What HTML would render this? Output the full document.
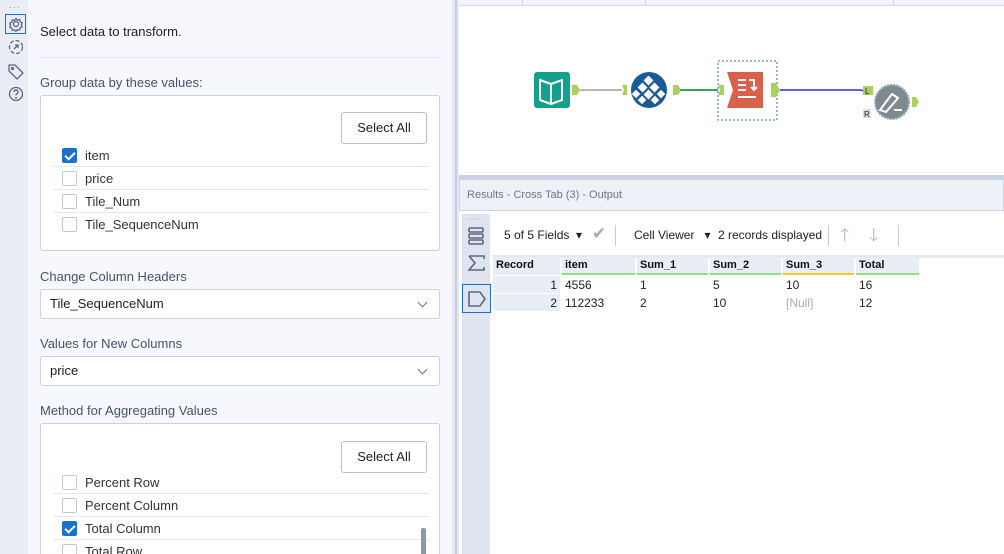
<!DOCTYPE html>
<html><head><meta charset="utf-8"><style>
*{box-sizing:border-box;margin:0;padding:0}
html,body{width:1004px;height:554px;overflow:hidden}
body{position:relative;font-family:"Liberation Sans",sans-serif;background:#fff;font-size:13px;color:#1e2a3a}
.abs{position:absolute}
.lbl{position:absolute;left:40px;font-size:13px;color:#46536b}
.box{position:absolute;left:40px;width:400px;background:#fff;border:1px solid #c9d0de;border-radius:3px}
.btn{position:absolute;right:12px;width:86px;height:32px;border:1px solid #b9c2d3;border-radius:3px;background:#fff;font-size:13px;text-align:center;line-height:30px;color:#222}
.row{position:absolute;left:12px;width:376px;height:23px;border-bottom:1px solid #e3e7ee;font-size:13px;line-height:23px;padding-left:32px;color:#333}
.cb{position:absolute;left:9px;top:4px;width:15px;height:15px;border:1px solid #c2c9d6;border-radius:2px;background:#fff}
.cb.on{background:#1a6fd0;border-color:#1a6fd0}
.cb.on:after{content:"";position:absolute;left:4px;top:1px;width:4px;height:8px;border-right:2px solid #fff;border-bottom:2px solid #fff;transform:rotate(45deg)}
.sel{position:absolute;left:40px;width:400px;height:30px;background:#fff;border:1px solid #c9d0de;border-radius:3px;font-size:13px;line-height:28px;padding-left:9px;color:#222}
.sel:after{content:"";position:absolute;right:13px;top:9px;width:6px;height:6px;border-right:1.5px solid #6a7590;border-bottom:1.5px solid #6a7590;transform:rotate(45deg)}
table{border-collapse:separate;border-spacing:2px 1px;font-size:12px;table-layout:fixed;width:430px}
td{height:17px;padding:0 3px;background:#fff;color:#222;overflow:hidden;white-space:nowrap}
th{height:18px;padding:0 3px;text-align:left;font-weight:bold;background:#e8edf6;color:#111;border-bottom:2px solid #90e37a;font-size:11px}
</style></head><body>
<div class="abs" style="left:0;top:0;width:28px;height:554px;background:#e9edf6"></div>
<div class="abs" style="left:9px;top:5px;font-size:9px;color:#8a93a8;letter-spacing:1px;line-height:4px">···</div>
<div class="abs" style="left:5px;top:14px;width:21px;height:20px;border:1px solid #1a6fd0"></div>
<svg class="abs" style="left:6px;top:15px" width="20" height="88" viewBox="0 0 20 88" fill="none" stroke="#5c6680" stroke-width="1.3">
<circle cx="10" cy="9" r="2.5"/><path d="M10 3.5l1.5 1.6 2.2-.5.5 2.2 2 1-.9 2 .9 2-2 1-.5 2.2-2.2-.5L10 16.5l-1.5-1.6-2.2.5-.5-2.2-2-1 .9-2-.9-2 2-1 .5-2.2 2.2.5z"/>
<circle cx="10" cy="32" r="6.5" stroke-dasharray="4 2"/><path d="M8 34l4-4M9 30h3v3"/>
<path d="M3 50v6l8 8 6-6-8-8z"/><circle cx="6.5" cy="53.5" r="1"/>
<circle cx="10" cy="79" r="6.5"/><path d="M8 77a2 2 0 1 1 2.5 2c-.5.2-.5.8-.5 1.5"/><circle cx="10" cy="83" r=".4"/>
</svg>
<div class="abs" style="left:28px;top:0;width:424px;height:554px;background:#f6f8fd"></div>
<div class="abs" style="left:40px;top:24px;font-size:13px;color:#222">Select data to transform.</div>
<div class="abs" style="left:40px;top:57px;width:400px;height:1px;background:#e2e6ee"></div>
<div class="lbl" style="top:75px">Group data by these values:</div>
<div class="box" style="top:95px;height:156px">
 <div class="btn" style="top:16px">Select All</div>
 <div class="row" style="top:48px"><span class="cb on"></span>item</div>
 <div class="row" style="top:71px"><span class="cb"></span>price</div>
 <div class="row" style="top:94px"><span class="cb"></span>Tile_Num</div>
 <div class="row" style="top:117px;border-bottom:none"><span class="cb"></span>Tile_SequenceNum</div>
</div>
<div class="lbl" style="top:269px">Change Column Headers</div>
<div class="sel" style="top:289px">Tile_SequenceNum</div>
<div class="lbl" style="top:336px">Values for New Columns</div>
<div class="sel" style="top:356px">price</div>
<div class="lbl" style="top:403px">Method for Aggregating Values</div>
<div class="box" style="top:423px;height:140px;overflow:hidden">
 <div class="btn" style="top:17px">Select All</div>
 <div class="row" style="top:47px"><span class="cb"></span>Percent Row</div>
 <div class="row" style="top:70px"><span class="cb"></span>Percent Column</div>
 <div class="row" style="top:93px"><span class="cb on"></span>Total Column</div>
 <div class="row" style="top:116px"><span class="cb"></span>Total Row</div>
 <div class="abs" style="left:380px;top:104px;width:5px;height:40px;background:#8c97ae;border-radius:2px"></div>
</div>
<div class="abs" style="left:452px;top:0;width:7px;height:554px;background:#e3e8f2"></div>
<div class="abs" style="left:455px;top:0;width:2px;height:554px;background:#c6cde0"></div>
<div class="abs" style="left:459px;top:0;width:545px;height:6px;background:#f2f4f9;border-bottom:1px solid #d4d9e6"></div>
<div class="abs" style="left:522px;top:0;width:1px;height:6px;background:#d4d9e6"></div>
<div class="abs" style="left:645px;top:0;width:1px;height:6px;background:#d4d9e6"></div>
<div class="abs" style="left:893px;top:0;width:1px;height:6px;background:#d4d9e6"></div>
<svg class="abs" style="left:530px;top:60px" width="400" height="65" viewBox="0 0 400 65">
 <rect x="4" y="12" width="36" height="36" rx="3" fill="#13a08c"/><path d="M10 20l11 4 11-4v20l-11 4-11-4z" fill="none" stroke="#fff" stroke-width="2"/><path d="M21 24v20" stroke="#fff" stroke-width="2"/>
 <path d="M42 25h5l3 5-3 5h-5z" fill="#a8d15e"/><line x1="50" y1="30" x2="92" y2="30" stroke="#a0a0a0" stroke-width="1.5"/><path d="M92 25h5v10h-5l2-5z" fill="#a8d15e"/>
 <circle cx="119" cy="30" r="18" fill="#1a5a96"/><g fill="#fff"><rect x="115" y="17" width="7" height="7" transform="rotate(45 118.5 20.5)"/><rect x="109" y="24" width="7" height="7" transform="rotate(45 112.5 27.5)"/><rect x="121" y="24" width="7" height="7" transform="rotate(45 124.5 27.5)"/><rect x="115" y="31" width="7" height="7" transform="rotate(45 118.5 34.5)"/><rect x="103" y="31" width="6" height="6" transform="rotate(45 106 34)"/><rect x="128" y="31" width="6" height="6" transform="rotate(45 131 34)"/><rect x="109" y="37" width="6" height="6" transform="rotate(45 112 40)"/><rect x="122" y="37" width="6" height="6" transform="rotate(45 125 40)"/></g>
 <path d="M143 25h5l3 5-3 5h-5z" fill="#a8d15e"/><line x1="150" y1="30" x2="188" y2="30" stroke="#3aa35a" stroke-width="2"/><path d="M188 25h6v10h-6l2-5z" fill="#a8d15e"/>
 <rect x="188" y="1" width="59" height="59" fill="none" stroke="#2d6fbf" stroke-dasharray="2 2"/>
 <path d="M197 12h36v36h-36l6-18z" fill="#d9604a"/><path d="M208 20h8M208 25h8M208 30h8M219 20h5v10m-3-3l3 3 3-3M208 37h18" stroke="#fff" stroke-width="2" fill="none"/>
 <path d="M241 23h5l4 7-4 7h-5z" fill="#a8d15e"/><path d="M250 30h80l5 1" stroke="#2b2bd8" stroke-width="1.5" fill="none"/>
 <rect x="333" y="26" width="10" height="9" fill="#a8d15e"/><text x="335" y="34" font-size="8" font-family="Liberation Sans" fill="#222">L</text>
 <rect x="333" y="49" width="8" height="9" fill="#ddd"/><text x="334" y="57" font-size="8" font-family="Liberation Sans" fill="#222">R</text>
 <circle cx="362" cy="42" r="17" fill="#7d8b90" stroke="#9aa5a8" stroke-width="2" stroke-dasharray="2 1"/><path d="M350 50l12-16 6 4-12 14zm14 0h8" stroke="#fff" stroke-width="2" fill="none"/>
 <path d="M382 37h4l3 5-3 5h-4z" fill="#a8d15e"/>
</svg>
<div class="abs" style="left:459px;top:175px;width:545px;height:4px;background:#c9d2e4"></div>
<div class="abs" style="left:459px;top:179px;width:545px;height:32px;background:#eef1f8;border:1px solid #cfd5e2;font-size:11px;color:#6c7589;line-height:30px;padding-left:7px">Results - Cross Tab (3) - Output</div>
<div class="abs" style="left:459px;top:211px;width:545px;height:343px;background:#fff"></div>
<div class="abs" style="left:462px;top:214px;width:28px;height:340px;background:#dfe5f0"></div>
<div class="abs" style="left:467px;top:216px;font-size:7px;color:#999">······</div>
<svg class="abs" style="left:462px;top:222px" width="30" height="92" viewBox="0 0 30 92" fill="none" stroke="#5c6680" stroke-width="1.6">
<rect x="7" y="6" width="14" height="4" rx="1"/><rect x="7" y="12" width="14" height="4" rx="1"/><rect x="7" y="18" width="14" height="4" rx="1"/>
<path d="M7 34h15v3M7 34l6 7-6 7h15v-3"/>
<path d="M7 70h11l5 7-5 7H7z"/>
</svg>
<div class="abs" style="left:462px;top:284px;width:29px;height:29px;border:1px solid #1a6fd0"></div>
<div class="abs" style="left:492px;top:214px;width:512px;height:42px;border-bottom:1px solid #e4e8f0;font-size:12px;color:#222">
 <span class="abs" style="left:12px;top:14px">5 of 5 Fields &nbsp;▾</span>
 <span class="abs" style="left:100px;top:10px;color:#aaa;font-size:17px">✔</span>
 <div class="abs" style="left:123px;top:11px;width:1px;height:21px;background:#ccc"></div>
 <span class="abs" style="left:142px;top:14px">Cell Viewer &nbsp;&nbsp;▾</span>
 <span class="abs" style="left:226px;top:14px">2 records displayed</span>
 <div class="abs" style="left:336px;top:11px;width:1px;height:21px;background:#ccc"></div>
 <span class="abs" style="left:348px;top:9px;color:#bbb;font-size:18px">🡑</span>
 <span class="abs" style="left:377px;top:9px;color:#bbb;font-size:18px">🡓</span>
 <div class="abs" style="left:406px;top:11px;width:1px;height:21px;background:#ccc"></div>
</div>
<div class="abs" style="left:492px;top:256px;width:512px;height:2px;background:#e4e8f0"></div>
<table class="abs" style="left:491px;top:256px">
<colgroup><col style="width:67px"><col style="width:73px"><col style="width:71px"><col style="width:71px"><col style="width:71px"><col style="width:63px"></colgroup>
<tr><th style="border-bottom-color:#e8edf6">Record</th><th>item</th><th>Sum_1</th><th>Sum_2</th><th style="border-bottom-color:#f5c830">Sum_3</th><th>Total</th></tr>
<tr><td style="text-align:right;background:#e8edf6">1</td><td>4556</td><td>1</td><td>5</td><td>10</td><td>16</td></tr>
<tr><td style="text-align:right;background:#e8edf6">2</td><td>112233</td><td>2</td><td>10</td><td style="color:#aab">[Null]</td><td>12</td></tr>
</table>
</body></html>
